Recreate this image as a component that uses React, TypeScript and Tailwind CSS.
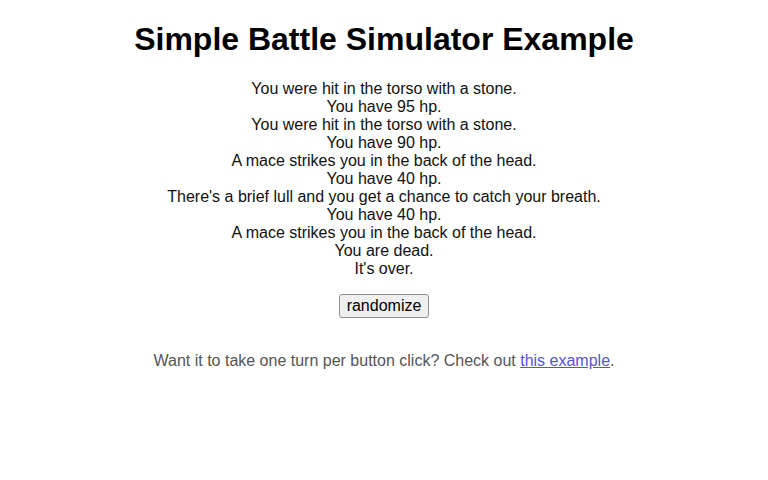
const log = [
  'You were hit in the torso with a stone.',
  'You have 95 hp.',
  'You were hit in the torso with a stone.',
  'You have 90 hp.',
  'A mace strikes you in the back of the head.',
  'You have 40 hp.',
  "There's a brief lull and you get a chance to catch your breath.",
  'You have 40 hp.',
  'A mace strikes you in the back of the head.',
  'You are dead.',
  "It's over.",
];

export default function App() {
  return (
    <div className="min-h-[480px] bg-white text-center font-['Liberation_Sans',Arial,sans-serif]">
      <h1 className="pt-[21px] text-[32px] leading-[37px] font-bold text-black">
        Simple Battle Simulator Example
      </h1>
      <div className="mt-[22px] text-base leading-[18px] text-[#111]">
        {log.map((line, i) => (
          <div key={i}>{line}</div>
        ))}
      </div>
      <div className="mt-[16px]">
        <button
          type="button"
          className="h-[24px] rounded-[3px] border border-[#8f8f8f] bg-[#efefef] px-[7px] text-base leading-[18px] text-black"
        >
          randomize
        </button>
      </div>
      <p className="mt-[34px] text-base leading-[18px] text-[#555]">
        Want it to take one turn per button click? Check out{' '}
        <a href="#" className="text-[#5555d6] underline">
          this example
        </a>
        .
      </p>
    </div>
  );
}
